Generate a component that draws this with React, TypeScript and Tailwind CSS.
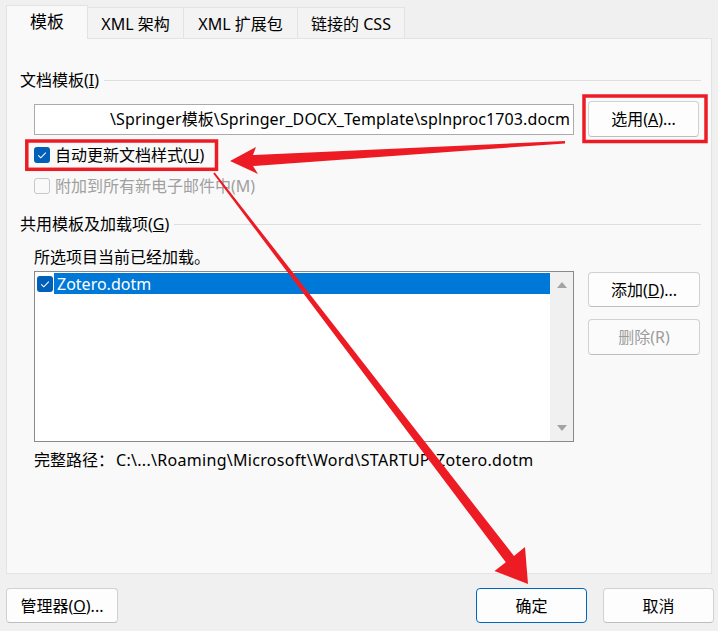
import React from "react";

const font = "font-['Noto_Sans','Noto_Sans_CJK_SC',sans-serif]";

function CheckBox({ checked, disabled }: { checked?: boolean; disabled?: boolean }) {
  if (checked) {
    return (
      <div className="w-4 h-4 shrink-0 rounded-[3px] bg-[#005fb8] flex items-center justify-center">
        <svg width="16" height="16" viewBox="0 0 16 16">
          <path d="M4.2 8.3 L6.8 10.8 L11.8 5.6" fill="none" stroke="#fff" strokeWidth="1.1" />
        </svg>
      </div>
    );
  }
  return (
    <div
      className={
        disabled
          ? "w-4 h-4 shrink-0 rounded-[3px] border border-[#c8c8c8] bg-[#f9f9f9]"
          : "w-4 h-4 shrink-0 rounded-[3px] border border-[#8a8a8a] bg-white"
      }
    />
  );
}

function Btn({
  children,
  className = "",
  disabled,
  primary,
}: {
  children: React.ReactNode;
  className?: string;
  disabled?: boolean;
  primary?: boolean;
}) {
  const border = primary ? "border-[#0067c0]" : "border-[#d1d1d1] border-b-[#bdbdbd]";
  const color = disabled ? "text-[#9d9d9d] bg-[#fbfbfb]" : "text-black bg-[#fdfdfd]";
  return (
    <div className={`flex items-center justify-center rounded-[4px] border ${border} ${color} ${className}`}>
      {children}
    </div>
  );
}

function GroupHeader({ children, className = "" }: { children: React.ReactNode; className?: string }) {
  return (
    <div className={`flex items-center h-[24px] ${className}`}>
      <span className="whitespace-nowrap">{children}</span>
      <div className="flex-1 h-px bg-[#dedede] ml-[5px]" />
    </div>
  );
}

const tabs = ["XML 架构", "XML 扩展包", "链接的 CSS"];
const tabWidths = ["w-[96px]", "w-[114px]", "w-[107px]"];

export default function App() {
  return (
    <div className={`relative w-[718px] h-[631px] overflow-hidden bg-[#f0f0f0] text-[16px] text-black ${font}`}>
      {/* tab strip */}
      <div className="flex items-end pl-[6px] h-[38px]">
        <div className="relative z-10 -mb-px w-[82px] h-[34px] bg-[#f9f9f9] border border-b-0 border-[#e3e3e3] flex items-center justify-center pb-[1px] text-[17px]">
          模板
        </div>
        {tabs.map((t, i) => (
          <div
            key={t}
            className={`${tabWidths[i]} h-[31px] bg-[#f3f3f3] border border-l-0 border-b-0 border-[#e3e3e3] flex items-center justify-center pt-[2px]`}
          >
            {t}
          </div>
        ))}
      </div>

      {/* panel */}
      <div className="mx-[6px] h-[536px] border border-[#e3e3e3] bg-[#f9f9f9] flex flex-col pl-[13px] pr-[10px] pt-[29px]">
        <GroupHeader>
          文档模板(<span className="underline">I</span>)
        </GroupHeader>

        <div className="flex items-center h-[36px] mt-[9px] pl-[14px]">
          <div className="w-[540px] h-[31px] border border-[#ababab] bg-white flex items-center justify-end overflow-hidden pr-[3px] whitespace-nowrap tracking-[0.1px]">
            \Springer模板\Springer_DOCX_Template\splnproc1703.docm
          </div>
          <Btn className="ml-[14px] w-[111px] h-[36px]">
            选用(<span className="underline">A</span>)...
          </Btn>
        </div>

        <div className="flex items-center gap-[5px] h-[24px] mt-[6px] pl-[14px]">
          <CheckBox checked />
          <span>
            自动更新文档样式(<span className="underline">U</span>)
          </span>
        </div>

        <div className="flex items-center gap-[5px] h-[24px] mt-[7px] pl-[14px] text-[#a0a0a0]">
          <CheckBox disabled />
          <span>附加到所有新电子邮件中(M)</span>
        </div>

        <GroupHeader className="mt-[14px]">
          共用模板及加载项(<span className="underline">G</span>)
        </GroupHeader>

        <div className="flex items-center h-[24px] mt-[9px] pl-[14px]">所选项目当前已经加载。</div>

        <div className="flex mt-[2px] pl-[14px]">
          <div className="w-[540px] h-[171px] border border-[#8a8a8a] bg-white flex">
            <div className="flex-1">
              <div className="mt-[1px] h-[21px] flex items-center">
                <div className="ml-[2px]">
                  <CheckBox checked />
                </div>
                <div className="ml-[1px] flex-1 h-full bg-[#0078d7] text-white pl-[3px] flex items-center">
                  Zotero.dotm
                </div>
              </div>
            </div>
            <div className="w-[23px] bg-[#f0f0f0] flex flex-col items-center justify-between pt-[10px] pb-[10px]">
              <svg width="10" height="6" viewBox="0 0 10 6">
                <path d="M0 6 L5 0 L10 6 Z" fill="#a3a3a3" />
              </svg>
              <svg width="10" height="6" viewBox="0 0 10 6">
                <path d="M0 0 L10 0 L5 6 Z" fill="#a3a3a3" />
              </svg>
            </div>
          </div>
          <div className="ml-[14px] w-[112px] pt-[1px] flex flex-col">
            <Btn className="h-[35px]">
              添加(<span className="underline">D</span>)...
            </Btn>
            <Btn className="h-[36px] mt-[12px]" disabled>
              删除(R)
            </Btn>
          </div>
        </div>

        <div className="flex items-center h-[24px] mt-[6px] pl-[14px] whitespace-nowrap">
          <span>完整路径：</span>
          <span className="ml-[2px] tracking-[0.3px]">C:\...\Roaming\Microsoft\Word\STARTUP\Zotero.dotm</span>
        </div>
      </div>

      {/* dialog buttons */}
      <div className="flex mt-[14px] pl-[6px] pr-[4px]">
        <Btn className="w-[112px] h-[35px]">
          管理器(<span className="underline">O</span>)...
        </Btn>
        <Btn primary className="ml-auto w-[111px] h-[35px]">
          确定
        </Btn>
        <Btn className="ml-[16px] w-[111px] h-[35px]">取消</Btn>
      </div>

      {/* annotations */}
      <svg className="absolute inset-0 pointer-events-none" width="718" height="631" viewBox="0 0 718 631">
        <rect x="584" y="96" width="122" height="45.5" fill="none" stroke="#ed1c24" strokeWidth="3.5" />
        <rect x="26.8" y="141" width="189.7" height="28.3" fill="none" stroke="#ed1c24" strokeWidth="3.5" />
        <polygon
          points="565,141 253,155 256,147 230,161 258,174 253,166 565,143.5"
          fill="#ed1c24"
        />
        <polygon
          points="214.8,172.4 514,556 525,547 528,584 494.5,571 505.8,562.2 213.2,173.6"
          fill="#ed1c24"
        />
      </svg>
    </div>
  );
}
